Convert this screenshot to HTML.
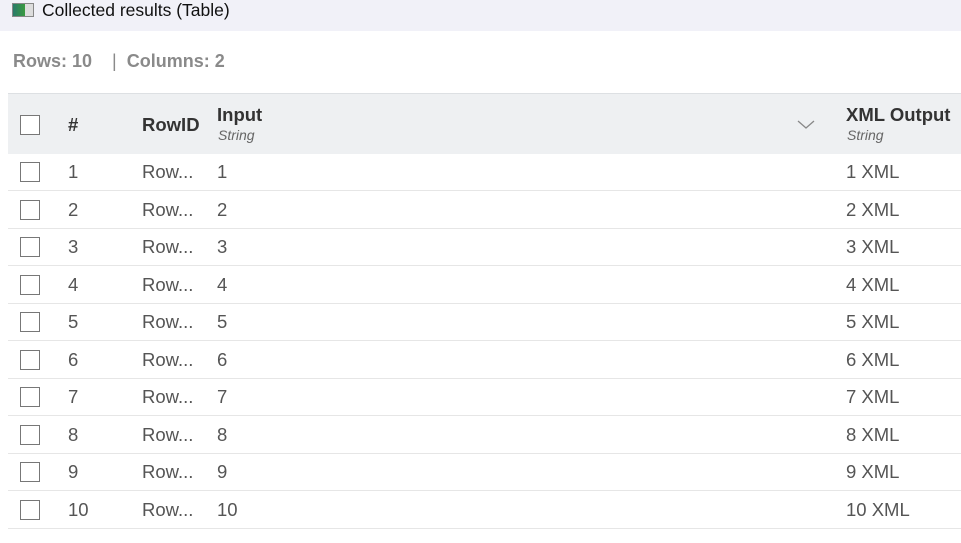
<!DOCTYPE html>
<html><head><style>
body{margin:0;width:961px;height:543px;background:#fff;font-family:"Liberation Sans",Arial,sans-serif;position:relative;overflow:hidden}
.title{position:absolute;left:0;top:0;width:961px;height:31px;background:#f1f1f8;}
.title span{position:absolute;left:42px;top:0px;font-size:17.5px;color:#111}
.icon{position:absolute;left:12px;top:3px;width:20px;height:12px;border:1px solid #888;background:linear-gradient(90deg,#2a7a6a 0,#3a9a40 60%,#ddd 60%)}
.stats{position:absolute;left:13px;top:51px;font-size:18px;font-weight:bold;color:#8a8a8a}
.hdr{position:absolute;left:8px;top:93px;width:953px;height:60px;background:#eef0f2;border-top:1px solid #dde0e3}
.cb{position:absolute;width:20px;height:20px;border:1.5px solid #777;background:#fff;box-sizing:border-box}
.h{position:absolute;font-weight:bold;font-size:18.5px;color:#333}
.sub{position:absolute;font-style:italic;font-size:14px;color:#666}
.row{position:absolute;left:8px;width:953px;height:37px;border-bottom:1px solid #e6e6e6;font-size:18.5px;color:#555}
.row span{position:absolute;top:8px}
</style></head><body>
<div class="title"><div class="icon"></div><span>Collected results (Table)</span></div>
<div class="stats">Rows: 10 &nbsp;&nbsp;&nbsp;<span style="font-weight:normal">|</span>&nbsp;&nbsp;Columns: 2</div>
<div class="hdr">
<div class="cb" style="left:12px;top:21px"></div>
<div class="h" style="left:60px;top:20px">#</div>
<div class="h" style="left:134px;top:20px">RowID</div>
<div class="h" style="left:209px;top:10px">Input</div>
<div class="sub" style="left:210px;top:33px">String</div>
<svg style="position:absolute;left:789px;top:26px" width="18" height="10"><path d="M1 1 L9 8 L17 1" stroke="#888" stroke-width="1.3" fill="none"/></svg>
<div class="h" style="left:838px;top:10px">XML Output</div>
<div class="sub" style="left:839px;top:33px">String</div>
</div>
<div id="rows"></div>
<script>
var h='';for(var i=1;i<=10;i++){var t=153+(i-1)*37.5;h+='<div class="row" style="top:'+t+'px"><div class="cb" style="left:12px;top:9px"></div><span style="left:60px">'+i+'</span><span style="left:134px">Row...</span><span style="left:209px">'+i+'</span><span style="left:838px">'+i+' XML</span></div>';}
document.getElementById('rows').innerHTML=h;
</script>
</body></html>
